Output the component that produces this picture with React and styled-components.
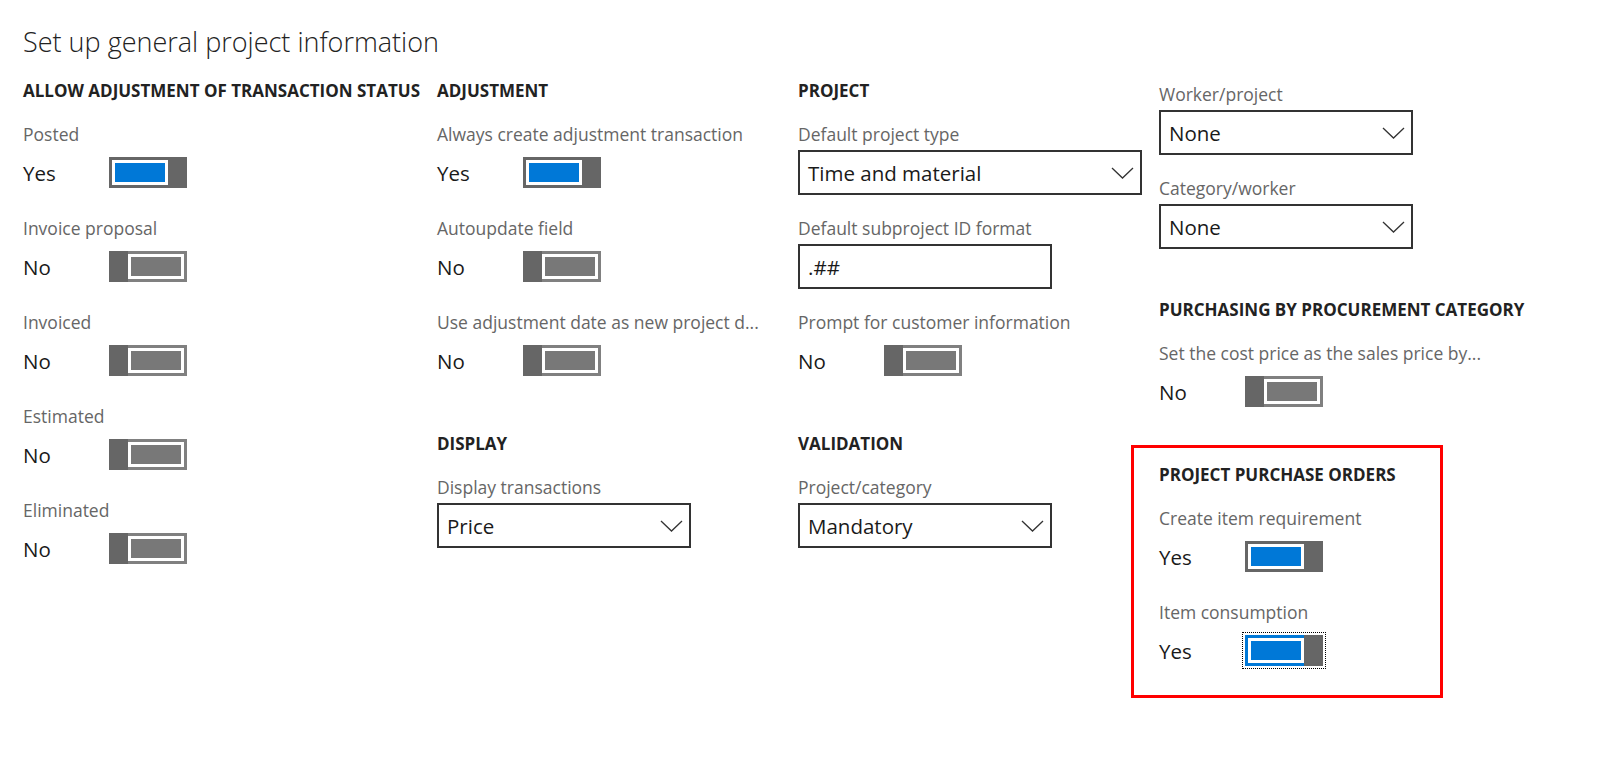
import React from 'react'
import styled, { createGlobalStyle, css } from 'styled-components'

const GlobalStyle = createGlobalStyle`
  html, body {
    margin: 0;
    padding: 0;
    background: #fff;
  }
  body {
    font-family: "Open Sans", "Noto Sans", sans-serif;
    color: #1a1a1a;
  }
`

const Page = styled.div`
  padding: 26px 0 0 23px;
  min-height: 773px;
  box-sizing: border-box;
`

const Title = styled.h1`
  margin: 0 0 22px;
  font-size: 27px;
  font-weight: 300;
  line-height: 32px;
  color: #222;
`

const Columns = styled.div`
  display: grid;
  grid-template-columns: 414px 361px 361px 1fr;
  align-items: start;
`

const Column = styled.div`
  display: flex;
  flex-direction: column;
  gap: 50px;
`

const Section = styled.section`
  display: flex;
  flex-direction: column;
  padding-top: ${p => p.$offset || 0}px;
`

const Highlight = styled(Section)`
  width: 312px;
  box-sizing: border-box;
  margin: -19px 0 0 -28px;
  padding: 16px 0 22px 25px;
  border: 3px solid #f00;
`

const Heading = styled.h2`
  margin: 0 0 21px;
  font-size: 17px;
  font-weight: 700;
  line-height: 22px;
  color: #222;
  white-space: nowrap;
`

const Fields = styled.div`
  display: flex;
  flex-direction: column;
  gap: 22px;
`

const Field = styled.div`
  display: flex;
  flex-direction: column;
`

const Label = styled.div`
  margin-bottom: 5px;
  font-size: 17.5px;
  line-height: 22px;
  color: #666;
  white-space: nowrap;
`

const ValueRow = styled.div`
  display: flex;
  align-items: center;
  height: 45px;
`

const ValueText = styled.span`
  width: 86px;
  font-size: 20.5px;
  color: #1a1a1a;
`

const Track = styled.div`
  display: flex;
  flex-direction: ${p => (p.$on ? 'row' : 'row-reverse')};
  width: 78px;
  height: 31px;
  ${p => p.$focused && css`
    outline: 1px dotted #000;
    outline-offset: 2px;
  `}
`

const Fill = styled.div`
  flex: 1;
  box-sizing: border-box;
  border: 3px solid ${p => p.$edge};
  border-${p => (p.$on ? 'right' : 'left')}-width: 0;
  background: ${p => (p.$on ? '#0078d7' : '#787878')};
  box-shadow: inset 0 0 0 3px #fff;
`

const Thumb = styled.div`
  width: 19px;
  background: #666;
`

const Box = styled.div`
  display: flex;
  align-items: center;
  justify-content: space-between;
  width: ${p => p.$w || 254}px;
  height: 45px;
  box-sizing: border-box;
  padding: 0 6px 0 8px;
  border: 2px solid #333;
  font-size: 20.5px;
  color: #1a1a1a;
`

const Chevron = () => (
  <svg width="23" height="12" viewBox="0 0 23 12">
    <path d="M1 1 L11.5 11 L22 1" fill="none" stroke="#333" strokeWidth="1.3" />
  </svg>
)

function Toggle({ on, focused }) {
  const edge = focused ? '#0078d7' : on ? '#666' : '#808080'
  return (
    <Track $on={on} $focused={focused}>
      <Fill $on={on} $edge={edge} />
      <Thumb />
    </Track>
  )
}

function ToggleField({ label, on, focused }) {
  return (
    <Field>
      <Label>{label}</Label>
      <ValueRow>
        <ValueText>{on ? 'Yes' : 'No'}</ValueText>
        <Toggle on={on} focused={focused} />
      </ValueRow>
    </Field>
  )
}

function SelectField({ label, value, width }) {
  return (
    <Field>
      <Label>{label}</Label>
      <ValueRow>
        <Box $w={width}>
          <span>{value}</span>
          <Chevron />
        </Box>
      </ValueRow>
    </Field>
  )
}

function InputField({ label, value }) {
  return (
    <Field>
      <Label>{label}</Label>
      <ValueRow>
        <Box>{value}</Box>
      </ValueRow>
    </Field>
  )
}

export default function App() {
  return (
    <>
      <GlobalStyle />
      <Page>
        <Title>Set up general project information</Title>
        <Columns>
          <Column>
            <Section>
              <Heading>ALLOW ADJUSTMENT OF TRANSACTION STATUS</Heading>
              <Fields>
                <ToggleField label="Posted" on />
                <ToggleField label="Invoice proposal" />
                <ToggleField label="Invoiced" />
                <ToggleField label="Estimated" />
                <ToggleField label="Eliminated" />
              </Fields>
            </Section>
          </Column>

          <Column>
            <Section>
              <Heading>ADJUSTMENT</Heading>
              <Fields>
                <ToggleField label="Always create adjustment transaction" on />
                <ToggleField label="Autoupdate field" />
                <ToggleField label="Use adjustment date as new project d..." />
              </Fields>
            </Section>
            <Section>
              <Heading>DISPLAY</Heading>
              <Fields>
                <SelectField label="Display transactions" value="Price" />
              </Fields>
            </Section>
          </Column>

          <Column>
            <Section>
              <Heading>PROJECT</Heading>
              <Fields>
                <SelectField label="Default project type" value="Time and material" width={344} />
                <InputField label="Default subproject ID format" value=".##" />
                <ToggleField label="Prompt for customer information" />
              </Fields>
            </Section>
            <Section>
              <Heading>VALIDATION</Heading>
              <Fields>
                <SelectField label="Project/category" value="Mandatory" />
              </Fields>
            </Section>
          </Column>

          <Column>
            <Section $offset={3}>
              <Fields>
                <SelectField label="Worker/project" value="None" />
                <SelectField label="Category/worker" value="None" />
              </Fields>
            </Section>
            <Section>
              <Heading>PURCHASING BY PROCUREMENT CATEGORY</Heading>
              <Fields>
                <ToggleField label="Set the cost price as the sales price by..." />
              </Fields>
            </Section>
            <Highlight>
              <Heading>PROJECT PURCHASE ORDERS</Heading>
              <Fields>
                <ToggleField label="Create item requirement" on />
                <ToggleField label="Item consumption" on focused />
              </Fields>
            </Highlight>
          </Column>
        </Columns>
      </Page>
    </>
  )
}
